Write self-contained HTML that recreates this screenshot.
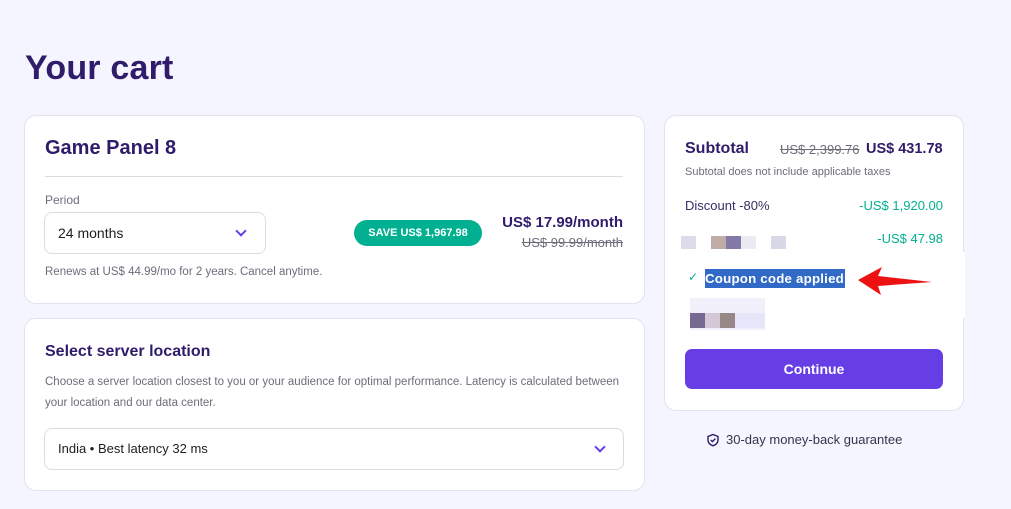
<!DOCTYPE html>
<html><head><style>
body{margin:0;width:1011px;height:509px;background:#f4f5fe;font-family:"Liberation Sans",sans-serif;color:#2f1c6a;position:relative;overflow:hidden}
.a{position:absolute}
.card{position:absolute;background:#fff;border:1px solid #e3e3ef;border-radius:12px}
.g{color:#6d6d7a}
.chev{position:absolute;width:6px;height:6px;border-right:2px solid #673de6;border-bottom:2px solid #673de6;transform:rotate(45deg)}
</style></head><body>
<div class="a" style="left:25px;top:49px;font-size:34px;font-weight:bold;color:#2f1c6a;letter-spacing:0.2px">Your cart</div>

<div class="card" style="left:24px;top:115px;width:619px;height:187px"></div>
<div class="a" style="left:45px;top:137px;font-size:20px;font-weight:bold">Game Panel 8</div>
<div class="a" style="left:45px;top:176px;width:578px;height:1px;background:#dadce0"></div>
<div class="a g" style="left:45px;top:193px;font-size:12px">Period</div>
<div class="a" style="left:44px;top:212px;width:220px;height:40px;border:1px solid #dadce0;border-radius:8px;background:#fff"></div>
<div class="a" style="left:58px;top:225px;font-size:14px;color:#1d1e20">24 months</div>
<div class="chev" style="left:237px;top:227px"></div>
<div class="a" style="left:354px;top:220px;width:128px;height:26px;border-radius:13px;background:#00b090;color:#fff;font-size:11px;font-weight:bold;text-align:center;line-height:26px">SAVE US$ 1,967.98</div>
<div class="a" style="left:470px;top:214px;width:153px;text-align:right;font-size:15px;font-weight:bold">US$ 17.99/month</div>
<div class="a g" style="left:470px;top:235px;width:153px;text-align:right;font-size:13px;text-decoration:line-through">US$ 99.99/month</div>
<div class="a g" style="left:45px;top:266px;font-size:11.5px">Renews at US$ 44.99/mo for 2 years. Cancel anytime.</div>

<div class="card" style="left:24px;top:318px;width:619px;height:171px"></div>
<div class="a" style="left:45px;top:343px;font-size:16px;font-weight:bold">Select server location</div>
<div class="a g" style="left:45px;top:372px;width:580px;font-size:11.5px;line-height:21px">Choose a server location closest to you or your audience for optimal performance. Latency is calculated between your location and our data center.</div>
<div class="a" style="left:44px;top:428px;width:578px;height:40px;border:1px solid #dadce0;border-radius:8px;background:#fff"></div>
<div class="a" style="left:58px;top:441px;font-size:13px;color:#1d1e20">India • Best latency 32 ms</div>
<div class="chev" style="left:596px;top:443px"></div>

<div class="card" style="left:664px;top:115px;width:298px;height:294px"></div>
<div class="a" style="left:685px;top:140px;font-size:16px;font-weight:bold">Subtotal</div>
<div class="a g" style="left:780px;top:142px;font-size:13px;text-decoration:line-through">US$ 2,399.76</div>
<div class="a" style="left:866px;top:141px;font-size:14.5px;font-weight:bold">US$ 431.78</div>
<div class="a g" style="left:685px;top:166px;font-size:11px">Subtotal does not include applicable taxes</div>
<div class="a" style="left:685px;top:198px;font-size:13px;color:#3b2d62">Discount -80%</div>
<div class="a" style="left:800px;top:198px;width:143px;text-align:right;font-size:13px;color:#00b090">-US$ 1,920.00</div>
<div class="a" style="left:681px;top:236px;width:15px;height:13px;background:#dcdbe8"></div>
<div class="a" style="left:711px;top:236px;width:15px;height:13px;background:#c0aca6"></div>
<div class="a" style="left:726px;top:236px;width:15px;height:13px;background:#8579a8"></div>
<div class="a" style="left:741px;top:236px;width:15px;height:13px;background:#eceaf2"></div>
<div class="a" style="left:771px;top:236px;width:15px;height:13px;background:#d8d8e6"></div>
<div class="a" style="left:800px;top:231px;width:143px;text-align:right;font-size:13px;color:#00b090">-US$ 47.98</div>
<div class="a" style="left:665px;top:252px;width:300px;height:66px;background:#fff"></div>
<div class="a" style="left:688px;top:270px;font-size:12px;color:#00b090">✓</div>
<div class="a" style="left:705px;top:269px;width:140px;height:19px;background:#3169c6;color:#fff;font-size:13.3px;font-weight:bold;line-height:19px;white-space:nowrap;letter-spacing:0.2px">Coupon code applied</div>
<svg class="a" style="left:850px;top:264px" width="85" height="34"><polygon points="8,16 32,3 28,12 82,18 28,22 31,31" fill="#ee1111"/></svg>
<div class="a" style="left:690px;top:298px;width:75px;height:32px;background:#f1eff9"></div>
<div class="a" style="left:690px;top:313px;width:15px;height:15px;background:#766a92"></div>
<div class="a" style="left:705px;top:313px;width:15px;height:15px;background:#d4c8d6"></div>
<div class="a" style="left:720px;top:313px;width:15px;height:15px;background:#978786"></div>
<div class="a" style="left:735px;top:313px;width:30px;height:15px;background:#e7e5fa"></div>
<div class="a" style="left:685px;top:349px;width:258px;height:40px;border-radius:7px;background:#673de6;color:#fff;font-size:14px;font-weight:bold;text-align:center;line-height:40px">Continue</div>
<svg class="a" style="left:706px;top:433px" width="14" height="14" viewBox="0 0 14 14"><path d="M7 1.5L12 3.5V7c0 3-2.3 4.8-5 5.8C4.3 11.8 2 10 2 7V3.5z" fill="none" stroke="#2f1c6a" stroke-width="1.4"/><path d="M4.8 7l1.6 1.6 3-3" fill="none" stroke="#2f1c6a" stroke-width="1.4"/></svg>
<div class="a" style="left:726px;top:432px;font-size:13px;color:#36344d">30-day money-back guarantee</div>
</body></html>
